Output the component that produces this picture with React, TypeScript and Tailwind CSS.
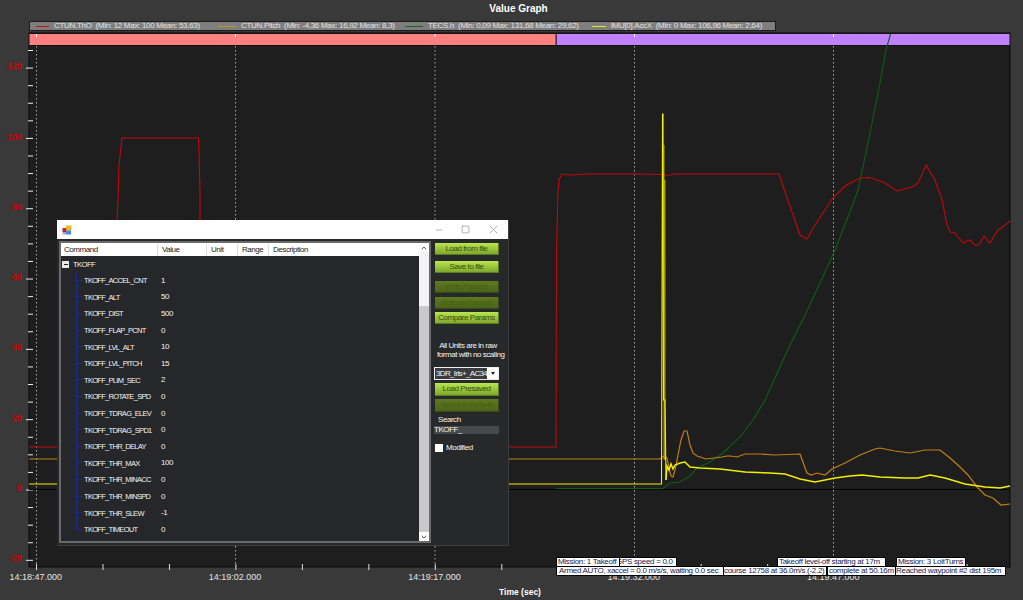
import { Minus, Square, X, ChevronUp, ChevronDown } from "lucide-react"

const params = [
  ["TKOFF_ACCEL_CNT", "1"],
  ["TKOFF_ALT", "50"],
  ["TKOFF_DIST", "500"],
  ["TKOFF_FLAP_PCNT", "0"],
  ["TKOFF_LVL_ALT", "10"],
  ["TKOFF_LVL_PITCH", "15"],
  ["TKOFF_PLIM_SEC", "2"],
  ["TKOFF_ROTATE_SPD", "0"],
  ["TKOFF_TDRAG_ELEV", "0"],
  ["TKOFF_TDRAG_SPD1", "0"],
  ["TKOFF_THR_DELAY", "0"],
  ["TKOFF_THR_MAX", "100"],
  ["TKOFF_THR_MINACC", "0"],
  ["TKOFF_THR_MINSPD", "0"],
  ["TKOFF_THR_SLEW", "-1"],
  ["TKOFF_TIMEOUT", "0"],
]

const redLine =
  "29,447 116,447 117,220 118,200 119,165 122,138 198.5,138 199,153 200,192 200.5,447 556,447 556.5,250 558,190 559,180 562,174 570,175 590,174 640,174 663,174.5 667,175.5 675,174 710,174 779,174 785,192 792,212 800,235 807,239 815,225 825,210 832,199 845,186 860,178 870,177.5 885,183 897,191 912,187 918,183 926,165 935,180 942,200 947,225 950,232 955,233 963,243 970,240 975,245 979,245 984,236 990,243 998,230 1004,226 1010,221"
const orangeLine =
  "29,459 660,459 664,456 667,458 669,468 671,476 673,477 675,470 678,455 681,440 684,431 687,431 690,445 693,453 697,456 706,459 722,457 727,456 730,456 737,457 745,454 760,454 775,455 800,454 807,473 811,475 817,473 825,475 832,469 845,463 860,455 875,449 880,448 895,451 910,453 925,450 940,450 950,458 960,467 968,475 978,488 985,495 993,498 1001,505 1010,504"
const greenLine =
  "556,488.5 663,488.5 667,485 670,483 680,482 690,476 697,468 710,462 723,453 740,437 753,420 765,400 775,378 790,345 805,315 820,283 835,250 848,217 858,190 868,143 880,83 886,50 890.5,34"
const yellowSpike = "29,484 661.5,484 662.5,114 663,114 663.5,400 665,400 666,480"
const yellowTail =
  "666,480 667,466 669,470 671,464 673,469 675,465 680,463 685,462 690,467 700,468 720,469 745,472 770,473 785,474 800,479 815,482 835,478 850,476 862,475 880,477 905,478 918,478 930,475 945,478 965,484 985,487 1000,488 1010,486"

const gridX = [36.5, 235.5, 435, 634.5, 833.5]
const tickX = Array.from({ length: 15 }, (_, i) => 36.5 + i * 66.47)
const tickY = Array.from({ length: 30 }, (_, i) => 50.5 + i * 17.58)

const GraphLines = () => (
  <svg className="block w-[981px] h-[534px] overflow-visible" viewBox="29 33 981 534" fill="none">
    <rect x="29" y="33" width="981" height="534" fill="#1e1e1e" stroke="#0a0a0a" />
    <rect x="29.5" y="34" width="526.5" height="11" fill="#ff8080" />
    <rect x="556.5" y="34" width="453" height="11" fill="#c080ff" />
    <line x1="556" y1="34" x2="556" y2="45" stroke="#222" />
    <line x1="29" y1="45.5" x2="1010" y2="45.5" stroke="#111" />
    {gridX.map((x) => (
      <line key={x} x1={x} y1="46" x2={x} y2="567" stroke="#a8a8a8" strokeDasharray="1.5 2.5" />
    ))}
    {gridX.map((x) => (
      <line key={"t" + x} x1={x} y1="34" x2={x} y2="37" stroke="#fff" />
    ))}
    {tickX.map((x) => (
      <line key={"b" + x} x1={x} y1="564" x2={x} y2="570" stroke="#ddd" />
    ))}
    {tickY.map((y, i) => (
      <line key={y} x1={(i + 2) % 4 === 3 ? 26 : 28} y1={y} x2="33" y2={y} stroke="#eee" />
    ))}
    <line x1="29" y1="489.5" x2="1010" y2="489.5" stroke="#050505" />
    <polyline points={greenLine} stroke="#0d5f12" strokeWidth="1.1" />
    <polyline points={redLine} stroke="#c00808" strokeWidth="1.1" />
    <polyline points={orangeLine} stroke="#c47f12" strokeWidth="1.2" />
    <line x1="664" y1="145" x2="664" y2="180" stroke="#a59b10" strokeWidth="1" />
    <line x1="664.5" y1="180" x2="664.5" y2="460" stroke="#a59b10" strokeWidth="2" />
    <polyline points={yellowSpike} stroke="#f2ee00" strokeWidth="1.1" />
    <polyline points={yellowTail} stroke="#f2ee00" strokeWidth="1.5" />
  </svg>
)

const LegendItem = ({ color, text, width, line }: { color: string; text: string; width: string; line: string }) => (
  <div className={`flex items-center shrink-0 ${width}`}>
    <span className={`h-px ${line} mr-[5px] ${color}`} />
    <span className="whitespace-pre">{text}</span>
  </div>
)

const Note = ({ text, className }: { text: string; className: string }) => (
  <div
    className={`absolute h-[10px] bg-white border border-black text-[#1a1a50] text-[8px] tracking-[-0.3px] leading-[8px] overflow-hidden whitespace-nowrap ${className}`}
  >
    {text}
  </div>
)

const GreenButton = ({ label, off, className }: { label: string; off?: boolean; className: string }) => (
  <div
    className={`h-[12px] w-[64px] flex items-center justify-center whitespace-nowrap border-b border-r ${
      off
        ? "bg-gradient-to-b from-[#5d7a1f] to-[#4a6418] border-[#3a4a16] text-[#46601a]"
        : "bg-gradient-to-b from-[#b9e650] to-[#7fa82b] border-[#5c7a22] text-[#36500e]"
    } ${className}`}
  >
    {label}
  </div>
)

const ParamRow = ({ name, value, last }: { name: string; value: string; last: boolean }) => (
  <div className="flex items-center h-[16.6px]">
    <div className="ml-[15px] w-[7px] self-stretch flex flex-col shrink-0">
      <div className="h-1/2 border-l border-b border-[#1c2a8c]" />
      {!last && <div className="h-1/2 border-l border-[#1c2a8c]" />}
    </div>
    <span className="ml-px w-[77px] whitespace-nowrap text-[7.5px] tracking-[-0.7px]">{name}</span>
    <span className="text-[8px] tracking-[-0.4px]">{value}</span>
  </div>
)

const ParamWindow = () => (
  <div className="absolute left-[57px] top-[220px] w-[452px] h-[326px] bg-[#26282a] border-r border-b border-[#3d3d3d] flex flex-col">
    <div className="h-[19px] bg-white flex items-center shrink-0">
      <svg className="ml-[5px] w-[10px] h-[10px]" viewBox="0 0 10 10">
        <rect x="0.5" y="3" width="4" height="4" fill="#c8202a" />
        <rect x="4" y="0.5" width="5.5" height="5" fill="#e8b824" />
        <rect x="4" y="5.5" width="5" height="4" fill="#4a86d8" />
        <rect x="0.5" y="7" width="3.5" height="2.5" fill="#9aa8b8" />
      </svg>
      <div className="ml-auto flex items-center text-[#a0a0a0]">
        <Minus className="w-[10px] h-[10px]" strokeWidth={1.8} />
        <Square className="ml-[17px] w-[9px] h-[9px]" strokeWidth={2.2} />
        <X className="ml-[17px] mr-[8px] w-[13px] h-[13px]" strokeWidth={1.6} />
      </div>
    </div>
    <div className="flex flex-1 min-h-0 pl-[2px] pt-[2px] text-[8px] tracking-[-0.45px]">
      <div className="w-[372px] h-[302px] border-2 border-[#6a6a6a] flex shrink-0">
        <div className="w-[358px] shrink-0 flex flex-col">
          <div className="h-[13px] bg-white text-[#222] flex items-center shrink-0">
            <span className="w-[97px] pl-[3px] border-r border-[#ddd]">Command</span>
            <span className="w-[49px] pl-[4px] border-r border-[#ddd]">Value</span>
            <span className="w-[31px] pl-[4px] border-r border-[#ddd]">Unit</span>
            <span className="w-[31px] pl-[4px] border-r border-[#ddd]">Range</span>
            <span className="pl-[4px]">Description</span>
          </div>
          <div className="flex-1 bg-[#25272a] text-[#f4f4f4]">
            <div className="flex items-center h-[16.6px]">
              <span className="ml-[1px] w-[7px] h-[7px] bg-[#e8e8e8] flex items-center justify-center">
                <span className="w-[4px] h-px bg-[#222]" />
              </span>
              <span className="ml-[4px] text-[7.5px] tracking-[-0.5px]">TKOFF</span>
            </div>
            {params.map(([name, value], i) => (
              <ParamRow key={name} name={name} value={value} last={i === params.length - 1} />
            ))}
          </div>
        </div>
        <div className="flex-1 flex flex-col bg-[#c9c9c9]">
          <div className="h-[9px] bg-white flex items-center justify-center">
            <ChevronUp className="w-[8px] h-[8px] text-[#333]" strokeWidth={2.5} />
          </div>
          <div className="h-[54px] bg-[#f4f4f4]" />
          <div className="flex-1" />
          <div className="h-[9px] bg-white flex items-center justify-center">
            <ChevronDown className="w-[8px] h-[8px] text-[#333]" strokeWidth={2.5} />
          </div>
        </div>
      </div>
      <div className="ml-[4px] w-[64px] flex flex-col text-[#f4f4f4]">
        <GreenButton label="Load from file" className="mt-[2px]" />
        <GreenButton label="Save to file" className="mt-[6px]" />
        <GreenButton label="Write Params" off className="mt-[8px]" />
        <GreenButton label="Refresh Params" off className="mt-[4px]" />
        <GreenButton label="Compare Params" className="mt-[3px]" />
        <div className="mt-[18px] ml-[2px] text-center leading-[8.5px] whitespace-nowrap">
          All Units are in raw
          <br />
          format with no scaling
        </div>
        <div className="-ml-px mt-[8px] h-[13px] border border-[#eee] bg-white flex items-center">
          <span className="w-[52px] h-full bg-[#3a3c40] pl-[1px] overflow-hidden whitespace-nowrap leading-[11px] tracking-[-0.65px]">
            3DR_Iris+_AC34.
          </span>
          <span className="mx-auto w-0 h-0 border-l-[2.5px] border-r-[2.5px] border-t-[3px] border-l-transparent border-r-transparent border-t-[#222]" />
        </div>
        <GreenButton label="Load Presaved" className="mt-[3px] h-[13px]" />
        <GreenButton label="Reset to Default" off className="mt-[3px] h-[13px]" />
        <span className="mt-[3px] ml-[3px] leading-[10px]">Search</span>
        <div className="-ml-px mt-px h-[8px] bg-[#46484a] leading-[8px]">TKOFF_</div>
        <div className="mt-[8px] flex items-center">
          <span className="w-[8px] h-[8px] bg-white" />
          <span className="ml-[3px]">Modified</span>
        </div>
      </div>
    </div>
  </div>
)

export default function App() {
  const yLabels = ["120", "100", "80", "60", "40", "20", "0", "-20"]
  const xLabels = ["14:18:47.000", "14:19:02.000", "14:19:17.000", "14:19:32.000", "14:19:47.000"]

  return (
    <div
      className="relative w-[1023px] h-[600px] overflow-hidden bg-[#393939] flex flex-col text-white"
      style={{ fontFamily: '"Liberation Sans", Arial, sans-serif' }}
    >
      <div className="h-[21px] pt-[3px] pl-[14px] text-center text-[10px] leading-[11px] font-bold">Value Graph</div>

      <div className="ml-[29px] w-[747px] h-[10px] bg-[#7e7e7e] border border-[#1c1c1c] pl-[6px] flex items-center text-[8px] tracking-[-0.3px] leading-[8px] text-[#e2e2e2]">
        <LegendItem color="bg-[#c01414]" line="w-[13px]" width="w-[182px]" text="CTUN.ThO  (Min: 12 Max: 100 Mean: 53,63)" />
        <LegendItem color="bg-[#c8901c]" line="w-[18px]" width="w-[187px]" text="CTUN.Pitch  (Min: -4,36 Max: 16,92 Mean: 8,3)" />
        <LegendItem color="bg-[#0f6a18]" line="w-[18px]" width="w-[187px]" text="TECS.h  (Min: 0,09 Max: 131,68 Mean: 29,62)" />
        <LegendItem color="bg-[#e8e400]" line="w-[18px]" width="w-[170px]" text="IMU[0].AccX  (Min: 0 Max: 106,96 Mean: 2,64)" />
      </div>

      <div className="mt-[2px] flex h-[534px] shrink-0">
        <div className="w-[29px] -mt-px flex flex-col text-[9px] font-bold text-[#d00000]">
          {yLabels.map((label) => (
            <div key={label} className="h-[70.25px] shrink-0 flex items-center justify-end pr-[7px]">
              {label}
            </div>
          ))}
        </div>
        <div className="relative w-[981px] h-[534px]">
          <GraphLines />
          <Note text="Mission: 1 Takeoff" className="left-[527px] top-[524px] w-[64px] pl-[1px]" />
          <Note text="GPS speed = 0.0" className="left-[590px] top-[524px] w-[58px] [text-indent:-4px] z-10" />
          <Note text="Takeoff level-off starting at 17m" className="left-[748px] top-[524px] w-[109px] pl-[1px]" />
          <Note text="Mission: 3 LoitTurns" className="left-[867px] top-[524px] w-[70px] pl-[1px]" />
          <Note text="Armed AUTO, xaccel = 0.0 m/s/s, waiting 0.0 sec" className="left-[527px] top-[533px] w-[168px] pl-[2px] z-20" />
          <Note text="course 12758 at 36.0m/s (-2.2)" className="left-[694px] top-[533px] w-[104px] z-20" />
          <Note text="complete at 50.16m" className="left-[798px] top-[533px] w-[69px] pl-[1px] z-20" />
          <Note text="Reached waypoint #2 dist 195m" className="left-[866px] top-[533px] w-[111px] z-20" />
        </div>
      </div>

      <div className="h-[20px] pt-[2px] ml-[-64px] flex items-center text-[9px] text-[#e4e4e4] shrink-0">
        {xLabels.map((label) => (
          <div key={label} className="w-[199.4px] shrink-0 text-center">
            {label}
          </div>
        ))}
      </div>
      <div className="h-[10px] pl-[17px] text-center text-[8.5px] leading-[10px] font-bold">Time (sec)</div>

      <ParamWindow />
    </div>
  )
}
